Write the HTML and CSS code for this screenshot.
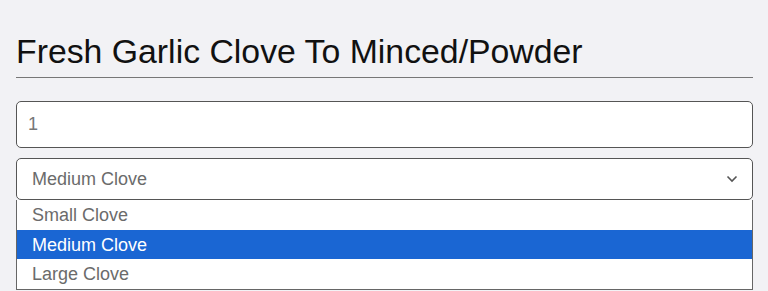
FILE: index.html
```html
<!DOCTYPE html>
<html lang="en">
<head>
    <meta charset="UTF-8">
    <meta name="viewport" content="width=device-width, initial-scale=1.0">
    <title>Fresh Garlic Clove To Minced/Powder</title>
    <link rel="stylesheet" href="styles.css">
</head>
<body>
    <div class="container">
        <h1>Fresh Garlic Clove To Minced/Powder</h1>
        <hr class="divider">

        <input type="text" class="amount" value="1">

        <!-- select (opened) -->
        <div class="select-wrap">
            <div class="select-box">
                <span>Medium Clove</span>
                <svg class="chevron" width="12" height="8" viewBox="0 0 12 8">
                    <path d="M1.5 1.5 L6 6 L10.5 1.5" fill="none" stroke="#555" stroke-width="1.6"/>
                </svg>
            </div>
            <ul class="options">
                <li>Small Clove</li>
                <li class="selected">Medium Clove</li>
                <li>Large Clove</li>
            </ul>
        </div>

        <div class="result"></div>
    </div>
</body>
</html>
```

FILE: styles.css
```css
body {
    font-family: 'Liberation Sans', Arial, sans-serif;
    margin: 0;
    background-color: #f2f2f5;
}
.container {
    padding: 0 15px 0 16px;
}
h1 {
    font-size: 33.8px;
    font-weight: normal;
    color: #111;
    margin: 0;
    padding-top: 32px;
    line-height: 39px;
}
.divider {
    border: none;
    border-top: 1px solid #777;
    margin: 6px 0 23px 0;
}
.amount {
    display: block;
    box-sizing: border-box;
    width: 100%;
    height: 47px;
    padding: 0 11px;
    font-family: inherit;
    font-size: 18px;
    color: #777;
    background: white;
    border: 1px solid #555;
    border-radius: 5px;
    margin: 0 0 10px 0;
}
.select-wrap {
    position: relative;
}
.select-box {
    box-sizing: border-box;
    height: 42px;
    display: flex;
    align-items: center;
    justify-content: space-between;
    padding: 0 14px 0 15px;
    font-size: 18px;
    color: #6b6b6b;
    background: white;
    border: 1px solid #555;
    border-radius: 5px;
}
.options {
    position: absolute;
    top: 42px;
    left: 0;
    right: 0;
    margin: 0;
    padding: 0;
    list-style: none;
    background: white;
    border: 1px solid #666;
    border-top: none;
    font-size: 18px;
    color: #6b6b6b;
}
.options li {
    height: 29.5px;
    line-height: 30px;
    padding-left: 15px;
}
.options li.selected {
    background-color: #1a66d3;
    color: white;
}
.result {
    height: 100px;
}
```
